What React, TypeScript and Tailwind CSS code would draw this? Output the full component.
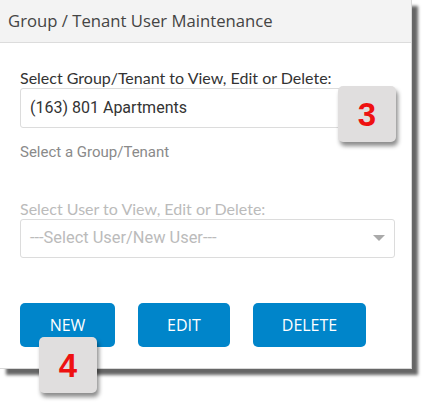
import React from "react";

function Badge({ n, className }: { n: string; className: string }) {
  return (
    <div
      className={
        "absolute w-[58px] h-[56px] rounded-[5px] bg-[#e0dede] shadow-[2px_4px_4px_rgba(0,0,0,0.45)] flex items-center justify-center text-[#ee1111] font-bold text-[33px] leading-none " +
        className
      }
      style={{ fontFamily: "'Liberation Sans', Arial, sans-serif" }}
    >
      {n}
    </div>
  );
}

export default function App() {
  return (
    <div className="relative w-[427px] h-[411px] bg-white overflow-hidden">
      <div className="w-[412px] h-[369px] bg-white border-r border-b border-[#d8d8d8] shadow-[6px_6px_3px_rgba(0,0,0,0.6)] flex flex-col">
        <div
          className="h-[43px] shrink-0 bg-[#f3f3f3] border-b border-[#dcdcdc] pl-2 flex items-center text-[16.7px] text-[#444]"
          style={{ fontFamily: "'Open Sans', sans-serif" }}
        >
          Group / Tenant User Maintenance
        </div>
        <div className="px-5 pt-[26px] flex flex-col">
          <div
            className="h-[18px] leading-[18px] text-[16px] text-[#333]"
            style={{ fontFamily: "Lato, sans-serif" }}
          >
            Select Group/Tenant to View, Edit or Delete:
          </div>
          <div
            className="mt-px h-[40px] w-[375px] border border-[#dcdcdc] rounded-[3px] pl-[9px] flex items-center text-[16px] text-[#333]"
            style={{ fontFamily: "Roboto, sans-serif" }}
          >
            (163) 801 Apartments
          </div>
          <div
            className="mt-4 h-[16px] leading-[16px] text-[15px] text-[#8a8a8a]"
            style={{ fontFamily: "Roboto, sans-serif" }}
          >
            Select a Group/Tenant
          </div>
          <div
            className="mt-[40px] h-[18px] leading-[18px] text-[16px] text-[#bbbbbb]"
            style={{ fontFamily: "Lato, sans-serif" }}
          >
            Select User to View, Edit or Delete:
          </div>
          <div
            className="mt-px h-[39px] w-[375px] border border-[#dcdcdc] rounded-[3px] pl-[9px] pr-[9px] flex items-center justify-between text-[16.4px] text-[#bbbbbb]"
            style={{ fontFamily: "Roboto, sans-serif" }}
          >
            <span>---Select User/New User---</span>
            <svg width="12" height="7" viewBox="0 0 12 7">
              <path d="M0 0 L12 0 L6 6 Z" fill="#aaaaaa" />
            </svg>
          </div>
          <div
            className="mt-[45px] flex gap-[23px] text-white text-[16px]"
            style={{ fontFamily: "'Open Sans', sans-serif" }}
          >
            <button className="w-[95px] h-[44px] rounded-[5px] bg-[#0085ca] flex items-center justify-center">
              NEW
            </button>
            <button className="w-[92px] h-[44px] rounded-[5px] bg-[#0085ca] flex items-center justify-center">
              EDIT
            </button>
            <button className="w-[113px] h-[44px] rounded-[5px] bg-[#0085ca] flex items-center justify-center">
              DELETE
            </button>
          </div>
        </div>
      </div>
      <Badge n="3" className="left-[338px] top-[86px]" />
      <Badge n="4" className="left-[39px] top-[337px]" />
    </div>
  );
}
